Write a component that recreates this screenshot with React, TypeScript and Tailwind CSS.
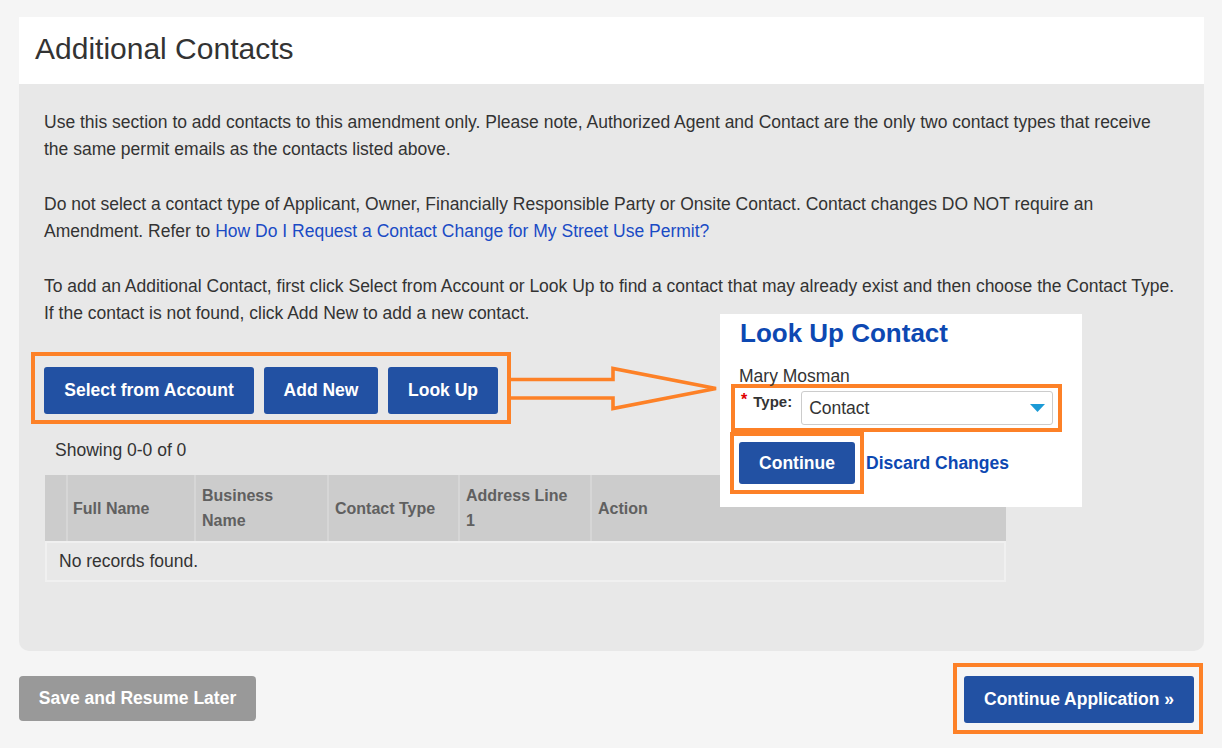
import React from "react";

const ORANGE = "border-[#fd8127]";

export default function App() {
  return (
    <div className="relative min-h-[748px] w-[1222px] bg-[#f5f5f5] pt-[17px] pl-[19px] pr-[18px] font-['Liberation_Sans',Arial,sans-serif] text-[#333]">
      <div className="rounded-b-[10px] bg-[#e8e8e8]">
        <div className="flex h-[67px] items-center bg-white px-[16px] pb-[3px] text-[30px] leading-[34px] text-[#333]">
          Additional Contacts
        </div>
        <div className="px-[25px] pt-[25px] pb-[69px] text-[17.5px] leading-[27px]">
          <p>
            Use this section to add contacts to this amendment only. Please note, Authorized Agent and Contact are the only two contact types that receive the same permit emails as the contacts listed above.
          </p>
          <p className="mt-[28px]">
            Do not select a contact type of Applicant, Owner, Financially Responsible Party or Onsite Contact. Contact changes DO NOT require an Amendment. Refer to{" "}
            <a className="text-[#1a4bc5]" href="#">
              How Do I Request a Contact Change for My Street Use Permit?
            </a>
          </p>
          <p className="mt-[28px]">
            To add an Additional Contact, first click Select from Account or Look Up to find a contact that may already exist and then choose the Contact Type. If the contact is not found, click Add New to add a new contact.
          </p>

          <div className="mt-[40px] flex gap-[10px]">
            <button className="h-[47px] w-[210px] rounded-[3px] bg-[#2251a3] text-[17.5px] font-bold text-white">
              Select from Account
            </button>
            <button className="h-[47px] w-[114px] rounded-[3px] bg-[#2251a3] text-[17.5px] font-bold text-white">
              Add New
            </button>
            <button className="h-[47px] w-[110px] rounded-[3px] bg-[#2251a3] text-[17.5px] font-bold text-white">
              Look Up
            </button>
          </div>

          <div className="mt-[25px] pl-[11px] leading-[22px]">Showing 0-0 of 0</div>

          <div className="mt-[14px] ml-px w-[961px]">
            <div className="grid h-[66px] grid-cols-[21px_128px_133px_131px_132px_1fr] bg-[#cccccc] text-[16px] font-bold leading-[25px] text-[#606060]">
              <div />
              <div className="flex items-center border-l-2 border-[#d6d6d6] pl-[5px]">Full Name</div>
              <div className="flex items-center border-l-2 border-[#d6d6d6] pl-[6px]">
                <span>
                  Business
                  <br />
                  Name
                </span>
              </div>
              <div className="flex items-center border-l-2 border-[#d6d6d6] pl-[6px]">Contact Type</div>
              <div className="flex items-center border-l-2 border-[#d6d6d6] pl-[6px]">
                <span>
                  Address Line
                  <br />1
                </span>
              </div>
              <div className="flex items-center border-l-2 border-[#d6d6d6] pl-[6px]">Action</div>
            </div>
            <div className="flex h-[41px] items-center border-2 border-[#f0f0f0] bg-[#e8e8e8] pl-[12px]">
              No records found.
            </div>
          </div>
        </div>
      </div>

      <div className="mt-[25px] flex items-start justify-between">
        <button className="h-[45px] w-[237px] rounded-[4px] bg-[#999999] text-[17.5px] font-bold text-white">
          Save and Resume Later
        </button>
        <button className="mr-[10px] h-[47px] w-[230px] rounded-[3px] bg-[#2251a3] text-[17.5px] font-bold text-white">
          Continue Application »
        </button>
      </div>

      {/* Annotation: button group highlight */}
      <div className={`absolute left-[31px] top-[352px] h-[72px] w-[480px] border-4 ${ORANGE}`} />

      {/* Annotation: arrow */}
      <svg className="absolute left-0 top-0" width="760" height="440" viewBox="0 0 760 440">
        <polygon
          points="509,379.5 613,379.5 613,368.5 716,388.5 613,408.5 613,398 509,398"
          fill="none"
          stroke="#fd8127"
          strokeWidth="3.6"
          strokeLinejoin="miter"
        />
      </svg>

      {/* Annotation: Look Up Contact popup */}
      <div className="absolute left-[720px] top-[314px] h-[193px] w-[362px] bg-white">
        <div className="pl-[20px] pt-[4px] text-[26px] font-bold leading-[30px] text-[#0d48b2]">Look Up Contact</div>
        <div className="mt-[19px] pl-[19px] text-[17.5px] leading-[18px] text-[#333]">Mary Mosman</div>
        <div className={`-mt-px ml-[11px] flex h-[48px] w-[331px] border-4 ${ORANGE} pl-[6px] pt-[3px]`}>
          <span className="text-[16px] font-bold leading-[18px] text-[#e00000]">*</span>
          <span className="ml-[6px] mt-[2px] text-[15px] font-bold leading-[18px] text-[#333]">Type:</span>
          <div className="ml-[9px] flex h-[34px] w-[252px] items-center justify-between rounded-[3px] border border-[#cccccc] bg-white pl-[7px] pr-[7px] text-[17.5px] text-[#333]">
            <span>Contact</span>
            <svg width="15" height="8" viewBox="0 0 15 8">
              <polygon points="0,0 15,0 7.5,8" fill="#1b9ad6" />
            </svg>
          </div>
        </div>
        <div className="flex items-center">
          <div className={`ml-[10px] h-[62px] w-[134px] border-4 ${ORANGE} px-[5px] py-[6px]`}>
            <button className="h-[42px] w-[116px] rounded-[3px] bg-[#2251a3] text-[17.5px] font-bold text-white">
              Continue
            </button>
          </div>
          <a href="#" className="ml-[2px] text-[17.5px] font-bold text-[#0d48b2]">
            Discard Changes
          </a>
        </div>
      </div>

      {/* Annotation: Continue Application highlight */}
      <div className={`absolute left-[953px] top-[663px] h-[71px] w-[250px] border-4 ${ORANGE}`} />
    </div>
  );
}
